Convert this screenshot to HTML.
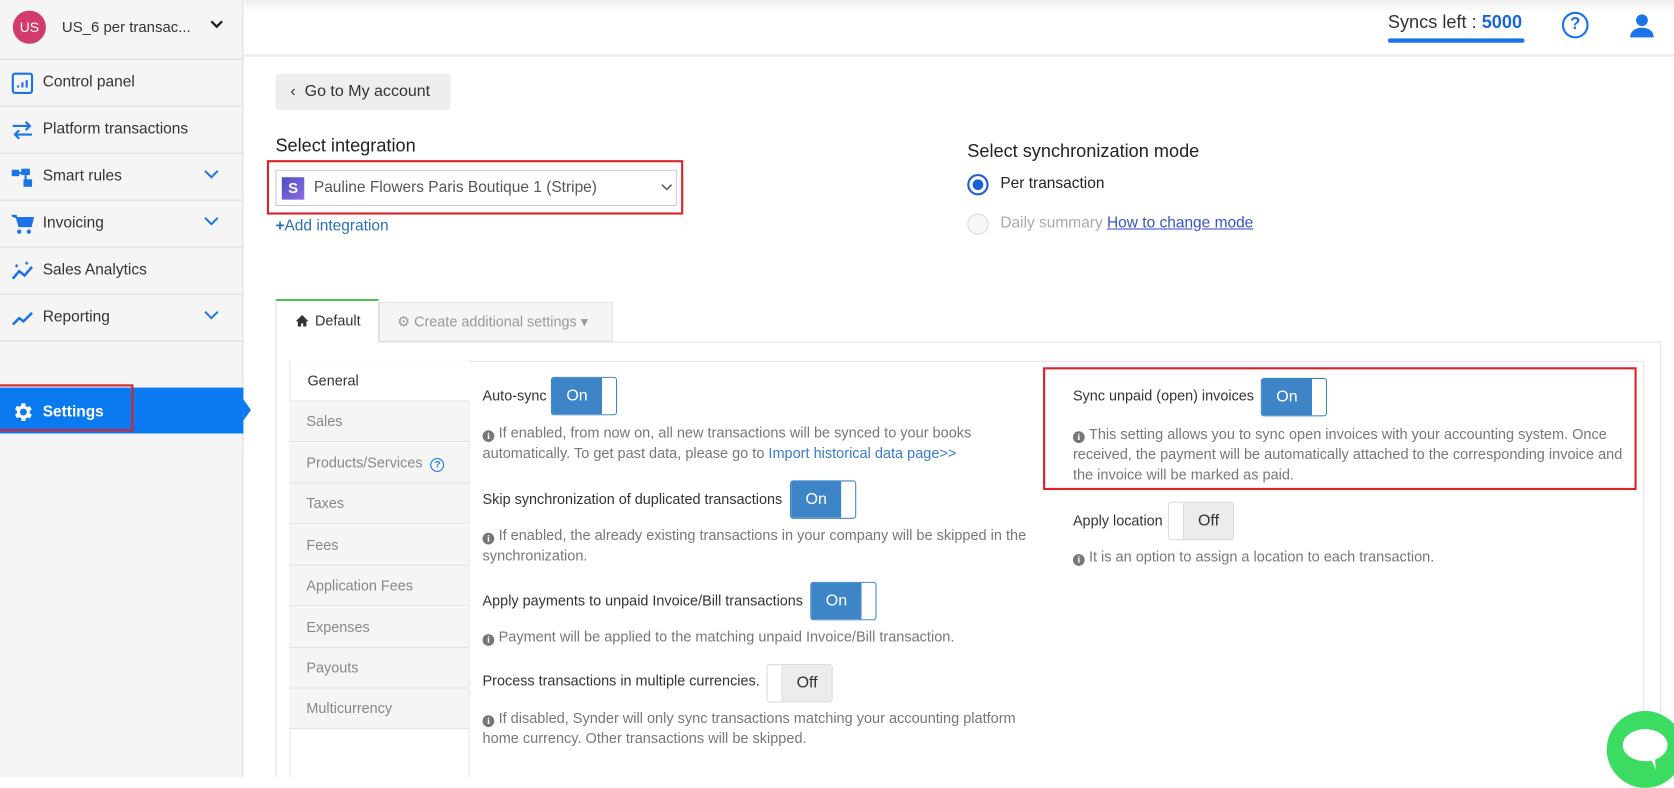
<!DOCTYPE html>
<html><head><meta charset="utf-8"><style>
*{box-sizing:border-box;margin:0;padding:0}
html,body{width:1674px;height:777px;overflow:hidden;background:#fff;font-family:"Liberation Sans",Arial,sans-serif}
#w{position:absolute;left:0;top:0;width:1568px;height:728px;transform:scale(1.0676);transform-origin:0 0}
.a{position:absolute}
.side{left:0;top:0;width:228px;height:728px;background:#f5f5f5;border-right:1px solid #ddd}
.nav{position:absolute;left:0;width:228px;height:44px;border-top:1px solid #ddd;font-size:14.5px;color:#333}
.nav span{position:absolute;left:40px;top:13px}
.nav svg.ic{position:absolute;left:10px;top:11px}
.chev{position:absolute;left:190px;top:14px}
.lbl{font-size:13.5px;color:#333}
.desc{font-size:13.6px;color:#777;line-height:19px}
.tg{position:absolute;height:36px;border:1px solid #3d85c6;border-radius:3px;overflow:hidden;font-size:15px}
.tg .on{position:absolute;left:0;top:0;bottom:0;width:47px;background:#3d85c6;color:#fff;text-align:center;line-height:34px}
.tg .k{position:absolute;right:0;top:0;bottom:0;width:13px;background:#fff}
.tgo{position:absolute;height:36px;border:1px solid #ddd;border-radius:3px;overflow:hidden;font-size:15px;background:#ececec;color:#333}
.tgo .k{position:absolute;left:0;top:0;bottom:0;width:14px;background:#fff;border-right:1px solid #ddd}
.tgo .of{position:absolute;left:14px;right:0;text-align:center;line-height:34px}
.i{display:inline-block;width:11px;height:11px;border-radius:50%;background:#777;color:#fff;font-size:9px;font-weight:bold;text-align:center;line-height:11px;margin-right:4px;vertical-align:-1px;font-family:"Liberation Serif",serif}
.vt{position:absolute;left:271px;width:168px;height:38px;background:#f5f5f5;border-bottom:1px solid #e3e3e3;font-size:13.5px;color:#888}
.vt span{position:absolute;left:16px;top:11px}
</style></head><body><div id="w">
<div class="a side"></div>
<div class="a" style="left:12px;top:10px;width:31px;height:31px;border-radius:50%;background:#d23b6c;color:#fff;font-size:13px;text-align:center;line-height:31px">US</div>
<div class="a" style="left:58px;top:17px;font-size:14px;color:#333">US_6 per transac...</div>
<svg class="a" style="left:196px;top:18px" width="14" height="10"><path d="M2 2l5 5 5-5" stroke="#222" stroke-width="2.2" fill="none"/></svg>

<div class="nav" style="top:55px"><svg class="ic" width="22" height="22"><rect x="2" y="2" width="18" height="18" rx="2" fill="none" stroke="#1a73e8" stroke-width="2"/><path d="M7 15v-2M11 15v-5M15 15v-7" stroke="#1a73e8" stroke-width="2"/></svg><span>Control panel</span></div>
<div class="nav" style="top:99px"><svg class="ic" width="22" height="22"><path d="M2 7h16M14 3l4 4-4 4M20 15H4M8 11l-4 4 4 4" stroke="#1a73e8" stroke-width="2" fill="none"/></svg><span>Platform transactions</span></div>
<div class="nav" style="top:143px"><svg class="ic" width="22" height="22"><rect x="1" y="4" width="7" height="6" fill="#1a73e8"/><rect x="10" y="3" width="8" height="6" fill="#1a73e8"/><rect x="12" y="13" width="8" height="7" fill="#1a73e8"/><path d="M8 7h4M14 9v7" stroke="#1a73e8" stroke-width="2"/></svg><span>Smart rules</span><svg class="chev" width="16" height="10"><path d="M2 2l6 6 6-6" stroke="#1a73e8" stroke-width="1.8" fill="none"/></svg></div>
<div class="nav" style="top:187px"><svg class="ic" width="22" height="22"><path d="M1 3h4l3 10h11l2-8H6z" stroke="#1a73e8" stroke-width="1.5" fill="#1a73e8"/><circle cx="8" cy="18" r="2" fill="#1a73e8"/><circle cx="17" cy="18" r="2" fill="#1a73e8"/></svg><span>Invoicing</span><svg class="chev" width="16" height="10"><path d="M2 2l6 6 6-6" stroke="#1a73e8" stroke-width="1.8" fill="none"/></svg></div>
<div class="nav" style="top:231px"><svg class="ic" width="22" height="22"><path d="M2 18l6-7 5 4 7-8" stroke="#1a73e8" stroke-width="2.4" fill="none"/><path d="M4 6h3M5.5 4.5v3M15 2v3M13.5 3.5h3" stroke="#1a73e8" stroke-width="1.2"/></svg><span>Sales Analytics</span></div>
<div class="nav" style="top:275px"><svg class="ic" width="22" height="22"><path d="M2 17l6-6 4 3 8-8" stroke="#1a73e8" stroke-width="2.4" fill="none"/></svg><span>Reporting</span><svg class="chev" width="16" height="10"><path d="M2 2l6 6 6-6" stroke="#1a73e8" stroke-width="1.8" fill="none"/></svg></div>
<div class="a" style="left:0;top:319px;width:228px;border-top:1px solid #ddd"></div>
<div class="a" style="left:0;top:363px;width:228px;height:43px;background:#0b7af0"></div>
<div class="a" style="left:228px;top:374px;width:0;height:0;border-top:10px solid transparent;border-bottom:10px solid transparent;border-left:7px solid #0b7af0"></div>
<svg class="a" style="left:10px;top:375px" width="22" height="22" viewBox="0 0 24 24"><path fill="#fff" d="M19.4 13a7.5 7.5 0 000-2l2.1-1.6-2-3.5-2.5 1a7.4 7.4 0 00-1.7-1L15 3h-4l-.4 2.6a7.4 7.4 0 00-1.7 1l-2.5-1-2 3.5L6.6 11a7.5 7.5 0 000 2l-2.1 1.6 2 3.5 2.5-1c.5.4 1.1.7 1.7 1L11 21h4l.4-2.6c.6-.3 1.2-.6 1.7-1l2.5 1 2-3.5zM13 15.5a3.5 3.5 0 110-7 3.5 3.5 0 010 7z"/></svg>
<div class="a" style="left:40px;top:378px;font-size:14.5px;color:#fff;font-weight:bold">Settings</div>
<div class="a" style="left:-2px;top:360px;width:127px;height:44px;border:2px solid #d9232b"></div>

<div class="a" style="left:229px;top:0;width:1339px;height:53px;background:linear-gradient(#eee,#fff 12px);border-bottom:2px solid #e8e8e8"></div>
<div class="a" style="left:1300px;top:11px;font-size:17px;color:#333">Syncs left : <b style="color:#1a66d6">5000</b></div>
<div class="a" style="left:1300px;top:36px;width:128px;height:4px;border-radius:2px;background:#1a73e8"></div>
<div class="a" style="left:1463px;top:11px;width:25px;height:25px;border:2.5px solid #1a73e8;border-radius:50%;color:#1a73e8;font-size:16px;font-weight:bold;text-align:center;line-height:20px">?</div>
<svg class="a" style="left:1526px;top:12px" width="24" height="24"><circle cx="12" cy="7" r="5.5" fill="#1a73e8"/><path d="M1 23c0-6 5-9 11-9s11 3 11 9z" fill="#1a73e8"/></svg>

<div class="a" style="left:258px;top:69px;width:164px;height:34px;background:#eee;border-radius:3px;font-size:15px;color:#333;line-height:34px;padding-left:14px">‹&nbsp; Go to My account</div>
<div class="a" style="left:258px;top:127px;font-size:17px;color:#222">Select integration</div>
<div class="a" style="left:258px;top:159px;width:376px;height:34px;border:1px solid #ccc;background:#fff"></div>
<div class="a" style="left:264px;top:166px;width:21px;height:21px;background:linear-gradient(135deg,#4b4fc4,#8d6be0);color:#fff;font-weight:bold;font-size:14px;text-align:center;line-height:21px">S</div>
<div class="a" style="left:294px;top:168px;font-size:14.5px;color:#555">Pauline Flowers Paris Boutique 1 (Stripe)</div>
<svg class="a" style="left:619px;top:172px" width="11" height="8"><path d="M1 1l4.5 4.5L10 1" stroke="#555" stroke-width="1.4" fill="none"/></svg>
<div class="a" style="left:250px;top:150px;width:390px;height:51px;border:2px solid #d9232b"></div>
<div class="a" style="left:258px;top:204px;font-size:14.5px;color:#2a6fb8"><b>+</b>Add integration</div>

<div class="a" style="left:906px;top:132px;font-size:17px;color:#222">Select synchronization mode</div>
<div class="a" style="left:906px;top:163px;width:20px;height:20px;border-radius:50%;border:2px solid #1a5fd6;background:#fff"><div style="position:absolute;left:3px;top:3px;width:10px;height:10px;border-radius:50%;background:#1a5fd6"></div></div>
<div class="a" style="left:937px;top:164px;font-size:14.5px;color:#222">Per transaction</div>
<div class="a" style="left:906px;top:200px;width:20px;height:20px;border-radius:50%;border:1px solid #ddd;background:#f7f7f7"></div>
<div class="a" style="left:937px;top:201px;font-size:14.5px;color:#aaa">Daily summary <span style="color:#3a52c8;text-decoration:underline">How to change mode</span></div>

<div class="a" style="left:354px;top:320px;width:1201px;border-top:1px solid #e3e3e3"></div>
<div class="a" style="left:258px;top:280px;width:97px;height:41px;background:#fff;border:1px solid #e3e3e3;border-top:2px solid #5cb85c;border-bottom:none"></div>
<svg class="a" style="left:277px;top:295px" width="12" height="11"><path d="M6 0L0 6h2v5h3V8h2v3h3V6h2z" fill="#333"/></svg>
<div class="a" style="left:295px;top:293px;font-size:13.5px;color:#333">Default</div>
<div class="a" style="left:355px;top:283px;width:219px;height:37px;background:#f5f5f5;border:1px solid #e3e3e3;font-size:13.5px;color:#999;line-height:35px;padding-left:16px">⚙ Create additional settings ▾</div>
<div class="a" style="left:258px;top:320px;height:408px;border-left:1px solid #e3e3e3"></div>
<div class="a" style="left:1555px;top:320px;height:408px;border-left:1px solid #e3e3e3"></div>
<div class="a" style="left:271px;top:338px;width:1269px;height:390px;border:1px solid #e5e5e5;border-bottom:none"></div>
<div class="a" style="left:439px;top:376px;height:352px;border-left:1px solid #e5e5e5"></div>

<div class="vt" style="top:338px;background:#fff;border-left:1px solid #e5e5e5"><span style="color:#333">General</span></div>
<div class="vt" style="top:376px"><span>Sales</span></div>
<div class="vt" style="top:415px"><span>Products/Services &nbsp;<b style="display:inline-block;width:13px;height:13px;border:1.5px solid #1a73e8;border-radius:50%;color:#1a73e8;font-size:9px;text-align:center;line-height:11px">?</b></span></div>
<div class="vt" style="top:453px"><span>Taxes</span></div>
<div class="vt" style="top:492px"><span>Fees</span></div>
<div class="vt" style="top:530px"><span>Application Fees</span></div>
<div class="vt" style="top:569px"><span>Expenses</span></div>
<div class="vt" style="top:607px"><span>Payouts</span></div>
<div class="vt" style="top:645px"><span>Multicurrency</span></div>

<div class="a lbl" style="left:452px;top:363px">Auto-sync</div>
<div class="tg" style="left:516px;top:353px;width:62px"><div class="on">On</div><div class="k"></div></div>
<div class="a desc" style="left:452px;top:396px;width:520px"><span class="i">i</span>If enabled, from now on, all new transactions will be synced to your books automatically. To get past data, please go to <span style="color:#3a7bc8">Import historical data page&gt;&gt;</span></div>

<div class="a lbl" style="left:452px;top:460px">Skip synchronization of duplicated transactions</div>
<div class="tg" style="left:740px;top:450px;width:62px"><div class="on">On</div><div class="k"></div></div>
<div class="a desc" style="left:452px;top:492px;width:520px"><span class="i">i</span>If enabled, the already existing transactions in your company will be skipped in the synchronization.</div>

<div class="a lbl" style="left:452px;top:555px">Apply payments to unpaid Invoice/Bill transactions</div>
<div class="tg" style="left:759px;top:545px;width:62px"><div class="on">On</div><div class="k"></div></div>
<div class="a desc" style="left:452px;top:587px;width:520px"><span class="i">i</span>Payment will be applied to the matching unpaid Invoice/Bill transaction.</div>

<div class="a lbl" style="left:452px;top:630px">Process transactions in multiple currencies.</div>
<div class="tgo" style="left:718px;top:622px;width:62px"><div class="k"></div><div class="of">Off</div></div>
<div class="a desc" style="left:452px;top:663px;width:520px"><span class="i">i</span>If disabled, Synder will only sync transactions matching your accounting platform home currency. Other transactions will be skipped.</div>

<div class="a lbl" style="left:1005px;top:363px">Sync unpaid (open) invoices</div>
<div class="tg" style="left:1181px;top:354px;width:62px"><div class="on">On</div><div class="k"></div></div>
<div class="a desc" style="left:1005px;top:397px;width:525px"><span class="i">i</span>This setting allows you to sync open invoices with your accounting system. Once received, the payment will be automatically attached to the corresponding invoice and the invoice will be marked as paid.</div>
<div class="a" style="left:977px;top:344px;width:556px;height:115px;border:2px solid #d9232b"></div>

<div class="a lbl" style="left:1005px;top:480px">Apply location</div>
<div class="tgo" style="left:1094px;top:470px;width:62px"><div class="k"></div><div class="of">Off</div></div>
<div class="a desc" style="left:1005px;top:512px;width:520px"><span class="i">i</span>It is an option to assign a location to each transaction.</div>

<div class="a" style="left:1505px;top:666px;width:72px;height:72px;border-radius:50%;background:#3cdc62"></div>
<svg class="a" style="left:1518px;top:681px" width="46" height="42"><ellipse cx="23" cy="17" rx="21" ry="15" fill="#fff"/><path d="M27 27l6 13 -1-14z" fill="#fff"/></svg>
</div></body></html>
